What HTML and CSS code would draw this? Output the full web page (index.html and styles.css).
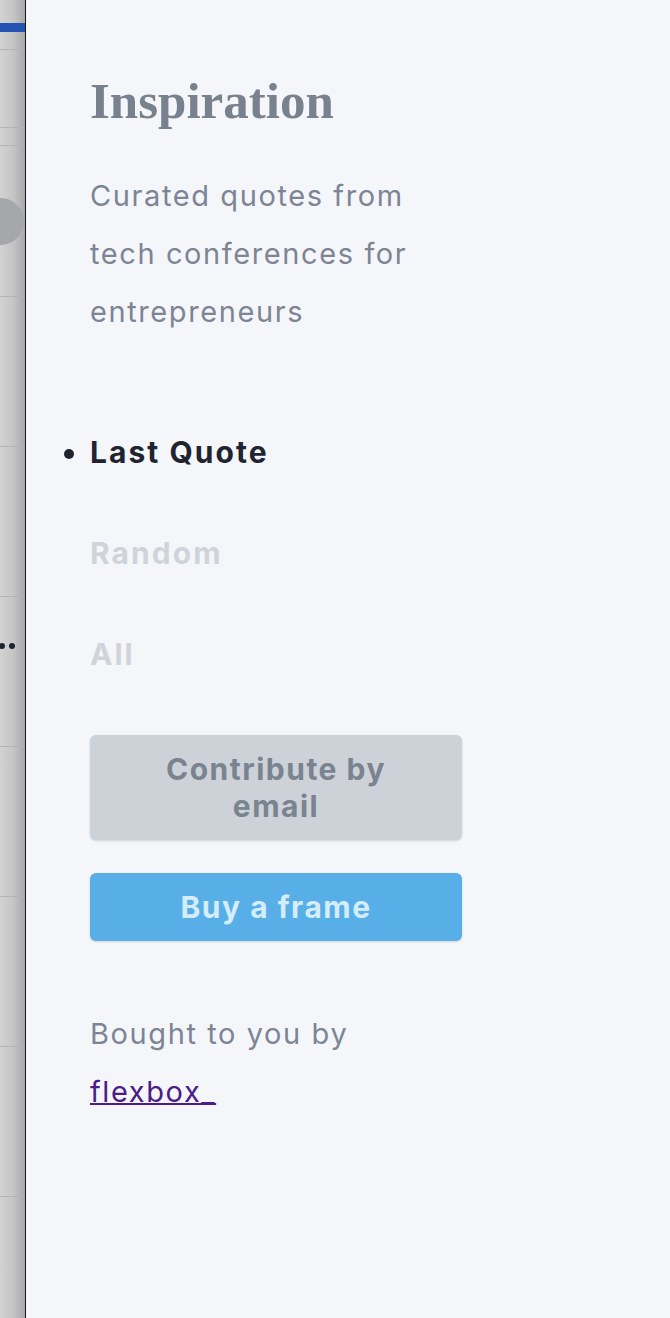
FILE: index.html
```html
<!DOCTYPE html>
<html lang="en">
<head>
<meta charset="utf-8">
<title>Inspiration</title>
<link rel="stylesheet" href="styles.css">
</head>
<body>
<div class="backdrop">
  <div class="bd-top"></div>
  <div class="bd-blue"></div>
  <div class="bd-row h19"></div>
  <div class="bd-row h77"></div>
  <div class="bd-row h17"></div>
  <div class="bd-row h150"><span class="bd-avatar"></span></div>
  <div class="bd-row h149"></div>
  <div class="bd-row h149"></div>
  <div class="bd-row h149 dots-row"><span class="bd-dot"></span><span class="bd-dot"></span></div>
  <div class="bd-row h149"></div>
  <div class="bd-row h149"></div>
  <div class="bd-row h149"></div>
</div>
<aside class="sidebar">
  <h1 class="title">Inspiration</h1>
  <p class="lead">Curated quotes from tech conferences for entrepreneurs</p>
  <ul class="nav">
    <li class="nav-item active">Last Quote</li>
    <li class="nav-item">Random</li>
    <li class="nav-item">All</li>
  </ul>
  <div class="actions">
    <button class="btn btn-gray">Contribute by email</button>
    <button class="btn btn-blue">Buy a frame</button>
  </div>
  <p class="credit">Bought to you by<br><a href="#" class="credit-link">flexbox_</a></p>
</aside>
</body>
</html>
```
FILE: styles.css
```css
html, body {
  margin: 0;
  padding: 0;
  height: 100%;
}
body {
  display: flex;
  min-height: 1318px;
  background: #f5f6fa;
  font-family: Inter, "Noto Sans", sans-serif;
  letter-spacing: 0.05em;
  overflow: hidden;
}
.backdrop {
  width: 25px;
  flex: none;
  border-right: 1px solid #141414;
  background: linear-gradient(to right, #d3d3d3 0%, #c4c4c4 55%, #a9a9a9 100%);
  overflow: hidden;
}
.bd-top { height: 23px; }
.bd-blue { height: 9px; background: #2553b4; }
.bd-row {
  border-bottom: 1px solid #b3b3b6;
  box-sizing: content-box;
  display: flex;
  align-items: center;
}
.h19 { height: 17px; }
.h77 { height: 77px; }
.h17 { height: 17px; }
.h150 { height: 150px; }
.h149 { height: 149px; }
.bd-avatar {
  width: 47px;
  height: 47px;
  border-radius: 50%;
  background: #a6a7aa;
  margin-left: -23px;
  flex: none;
}
.dots-row {
  align-items: flex-start;
  gap: 4px;
}
.dots-row .bd-dot:first-child { margin-left: -1px; }
.bd-dot {
  width: 6px;
  height: 6px;
  border-radius: 50%;
  background: #1d2630;
  margin-top: 46px;
  flex: none;
}
.sidebar {
  flex: 1;
  padding: 71px 0 0 64px;
  box-sizing: border-box;
}
.title {
  margin: 0;
  font-family: "Liberation Serif", "DejaVu Serif", serif;
  font-weight: 700;
  font-size: 51px;
  line-height: 60px;
  letter-spacing: 0;
  color: #78828f;
}
.lead {
  margin: 36px 0 0;
  width: 340px;
  font-size: 29px;
  line-height: 58px;
  letter-spacing: 0.055em;
  color: #7c8594;
}
.nav {
  margin: 91px 0 0;
  padding: 0;
  list-style: none;
  display: flex;
  flex-direction: column;
  gap: 61px;
}
.nav-item {
  font-size: 30px;
  line-height: 40px;
  font-weight: 700;
  letter-spacing: 0.068em;
  color: #d0d4da;
}
.nav-item.active {
  color: #1e2530;
  list-style: disc outside;
}
.actions {
  margin-top: 61px;
  width: 372px;
  display: flex;
  flex-direction: column;
  gap: 33px;
}
.btn {
  border: 0;
  border-radius: 6px;
  padding: 15.5px 40px;
  font-family: Inter, "Noto Sans", sans-serif;
  font-size: 30px;
  line-height: 37px;
  font-weight: 700;
  letter-spacing: 0.05em;
  box-shadow: 0 1px 2px rgba(0, 0, 0, 0.15);
  text-align: center;
}
.btn-gray {
  background: #cdd1d8;
  color: #7a8390;
}
.btn-blue {
  background: #58aee6;
  color: #d3edfd;
}
.credit {
  margin: 64px 0 0;
  font-size: 29px;
  line-height: 58px;
  letter-spacing: 0.055em;
  color: #7c8594;
}
.credit-link {
  color: #4b1b8a;
  text-decoration: underline;
  text-decoration-thickness: 2px;
}
```
